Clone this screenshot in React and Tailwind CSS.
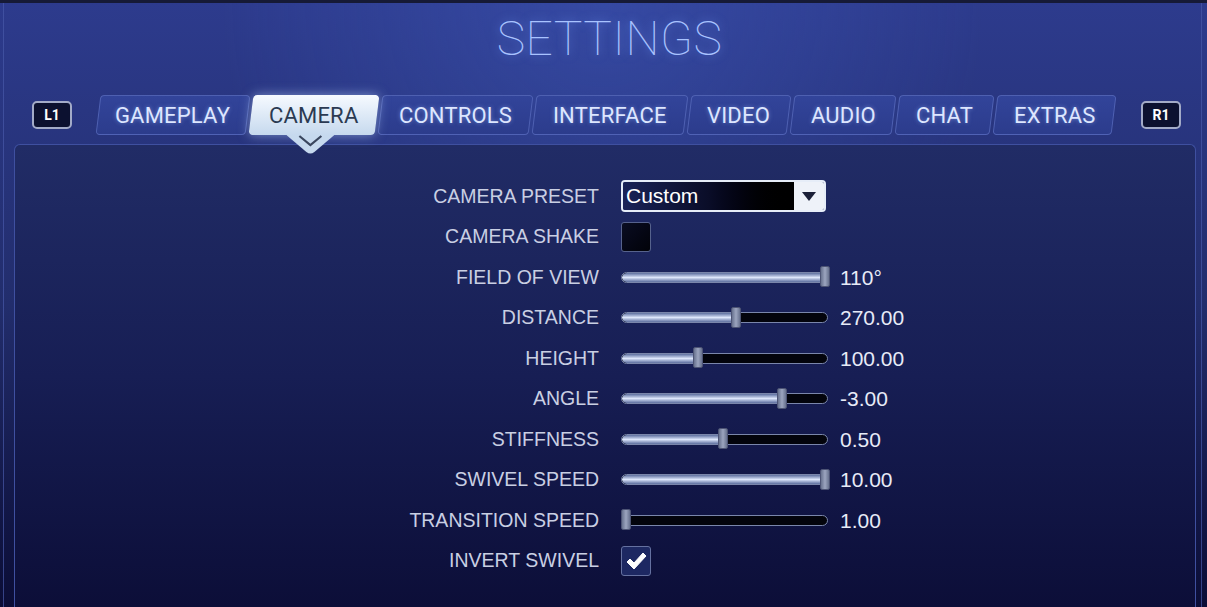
import React from "react";

const tabs = [
  { label: "GAMEPLAY", w: "w-[150px]" },
  { label: "CAMERA", w: "w-[126px]", active: true },
  { label: "CONTROLS", w: "w-[151px]" },
  { label: "INTERFACE", w: "w-[152px]" },
  { label: "VIDEO", w: "w-[100px]" },
  { label: "AUDIO", w: "w-[102px]" },
  { label: "CHAT", w: "w-[95px]" },
  { label: "EXTRAS", w: "w-[119px]" },
];

const sliders = [
  { label: "FIELD OF VIEW", frac: 1, value: "110°" },
  { label: "DISTANCE", frac: 0.56, value: "270.00" },
  { label: "HEIGHT", frac: 0.365, value: "100.00" },
  { label: "ANGLE", frac: 0.79, value: "-3.00" },
  { label: "STIFFNESS", frac: 0.49, value: "0.50" },
  { label: "SWIVEL SPEED", frac: 1, value: "10.00" },
  { label: "TRANSITION SPEED", frac: 0, value: "1.00" },
];

const TRACK = 207;
const THUMB = 10;

function Badge({ children }) {
  return (
    <div className="w-[40px] h-[28px] mt-[6px] rounded-[5px] border-2 border-[#a3abc8] bg-[#0c1130] flex items-center justify-center text-[14px] font-bold text-white">
      {children}
    </div>
  );
}

function Tab({ label, w, active }) {
  if (active) {
    return (
      <div
        className={`relative ${w} h-[40px] skew-x-[-7deg] rounded-[4px] bg-gradient-to-b from-[#f6faff] to-[#c6d9ee] shadow-[0_0_12px_rgba(190,215,255,0.55)] flex items-center justify-center z-10`}
      >
        <span className="skew-x-[7deg] text-[22px] text-[#2b3a52] tracking-[0.2px]">{label}</span>
        <div className="absolute top-full left-1/2 -translate-x-1/2 skew-x-[7deg]">
          <svg width="48" height="19" viewBox="0 0 48 19">
            <path d="M0 0 H48 L28 17 Q24 20 20 17 Z" fill="#c6d9ee" />
            <path d="M13 1 L24 10 L35 1" fill="none" stroke="#3a465e" strokeWidth="2.2" />
          </svg>
        </div>
      </div>
    );
  }
  return (
    <div
      className={`${w} h-[40px] skew-x-[-7deg] rounded-[4px] border border-[#5c6fc0]/70 bg-gradient-to-b from-[#32449a] to-[#2c3c8c] flex items-center justify-center`}
    >
      <span className="skew-x-[7deg] text-[22px] text-[#dde6ff] tracking-[0.2px] [text-shadow:0_0_4px_rgba(160,190,255,0.5)]">
        {label}
      </span>
    </div>
  );
}

function Row({ label, children }) {
  return (
    <div className="flex items-center h-[40.5px]">
      <div className="w-[584px] text-right text-[19.5px] text-[#c9cfe3]">{label}</div>
      <div className="ml-[22px] flex items-center">{children}</div>
    </div>
  );
}

function Slider({ frac, value }) {
  return (
    <>
      <div className="relative w-[207px] h-[22px] flex items-center">
        <div className="w-full h-[11px] rounded-full border border-[#7a86ab] bg-[#03040c] overflow-hidden">
          <div
            className="h-full rounded-full bg-gradient-to-b from-[#5d6e9e] via-[#dde6fb] to-[#5d6e9e]"
            style={{ width: frac * (TRACK - THUMB) + THUMB / 2 }}
          />
        </div>
        <div
          className="absolute top-0 h-[21px] w-[10px] rounded-[2px] border border-[#4d5475] bg-gradient-to-r from-[#68728f] via-[#9ca5bf] to-[#68728f]"
          style={{ left: frac * (TRACK - THUMB) + (frac === 1 ? 2 : 0) }}
        />
      </div>
      <span className="ml-[12px] text-[21px] text-[#e7ebf7]">{value}</span>
    </>
  );
}

export default function App() {
  return (
    <div
      className="w-[1207px] h-[607px] overflow-hidden border-t-[3px] border-[#161a36] bg-gradient-to-b from-[#2d3b8d] via-[#222d6c] to-[#0b0d36]"
      style={{ fontFamily: '"Liberation Sans", Arial, sans-serif' }}
    >
      <div className="h-full ml-[3px] mr-[5px] border-x border-[#4759a8]/70 flex flex-col bg-[radial-gradient(ellipse_at_50%_0%,rgba(70,100,205,0.35),transparent_45%)]">
        {/* Title */}
        <div className="h-[92px] flex justify-center pt-[12px] pl-[14px]">
          <h1
            className="text-[48px] leading-none font-thin tracking-[0.5px] text-[#a9c3ff] [text-shadow:0_0_10px_rgba(120,160,255,0.7)]"
            style={{ fontFamily: "Roboto, sans-serif" }}
          >
            SETTINGS
          </h1>
        </div>

        {/* Tabs */}
        <div className="flex pl-[28px] h-[40px]" style={{ fontFamily: "Roboto, sans-serif" }}>
          <Badge>L1</Badge>
          <div className="flex gap-[3px] ml-[26px]">
            {tabs.map((t) => (
              <Tab key={t.label} {...t} />
            ))}
          </div>
          <div className="ml-[27px]">
            <Badge>R1</Badge>
          </div>
        </div>

        {/* Panel */}
        <div className="flex-1 mt-[9px] ml-[10px] mr-[5px] rounded-t-[6px] border border-b-0 border-[#3f50a0] bg-gradient-to-b from-[#212c66] via-[#171e54] to-[#0c0e38] pt-[31px]">
          <Row label="CAMERA PRESET">
            <div className="flex w-[205px] h-[32px] rounded-[4px] border-2 border-[#e6edf8] overflow-hidden">
              <div className="flex-1 bg-gradient-to-r from-[#1a2358] via-[#0a0d28] to-[#000000] text-[21px] text-white leading-[28px] pl-[3px]">
                Custom
              </div>
              <div className="w-[30px] bg-[#eef2f9] flex items-center justify-center">
                <svg width="14" height="9" viewBox="0 0 14 9">
                  <path d="M0 0 H14 L7 9 Z" fill="#1b2038" />
                </svg>
              </div>
            </div>
          </Row>
          <Row label="CAMERA SHAKE">
            <div className="w-[30px] h-[30px] rounded-[3px] border border-[#56628c] bg-gradient-to-br from-[#0a0d22] to-[#020309]" />
          </Row>
          {sliders.map((s) => (
            <Row key={s.label} label={s.label}>
              <Slider frac={s.frac} value={s.value} />
            </Row>
          ))}
          <Row label="INVERT SWIVEL">
            <div className="w-[30px] h-[30px] rounded-[3px] border border-[#6571a0] bg-[#1d2862] flex items-center justify-center">
              <svg width="22" height="20" viewBox="0 0 22 20">
                <path d="M2 11 L5 8 L9 12 L18 2 L21 5 L9 18 Z" fill="#ffffff" strokeLinejoin="round" stroke="#ffffff" strokeWidth="1" />
              </svg>
            </div>
          </Row>
        </div>
      </div>
    </div>
  );
}
